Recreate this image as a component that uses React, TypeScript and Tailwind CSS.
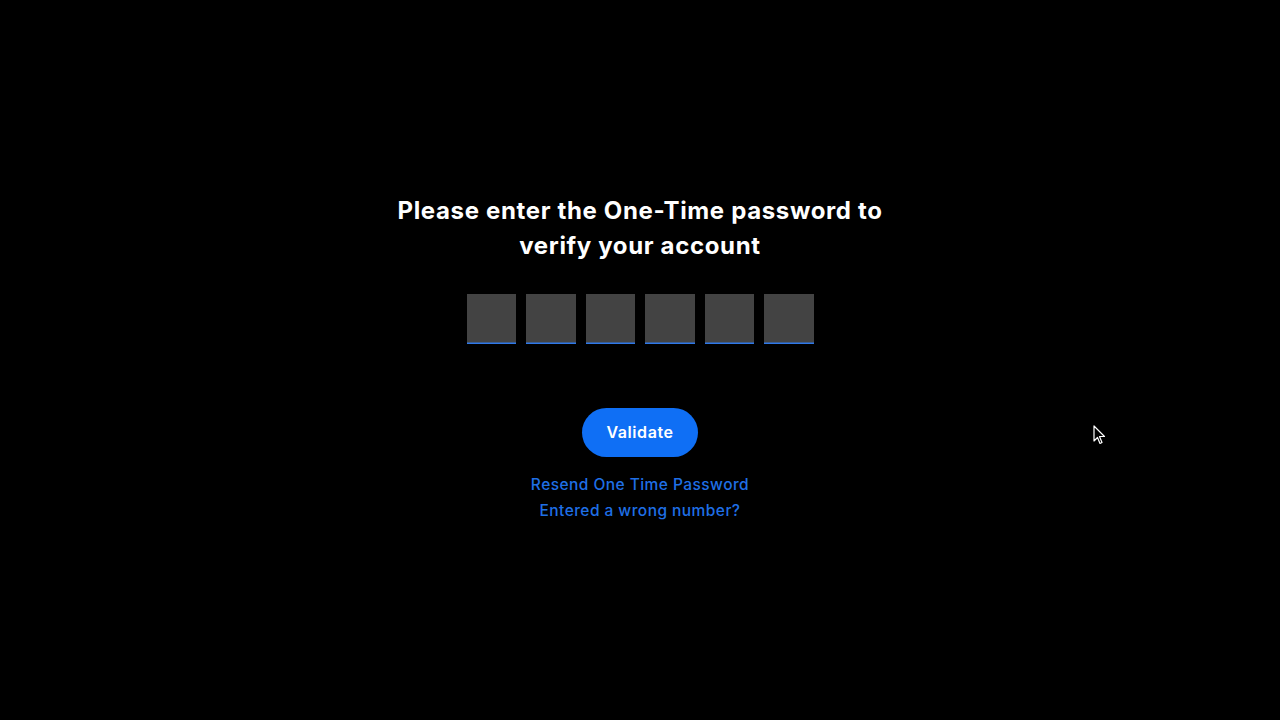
import { useRef } from "react";

const font = { fontFamily: '"Inter", "Noto Sans", sans-serif' };

export default function App() {
  const refs = useRef<(HTMLInputElement | null)[]>([]);

  return (
    <div className="relative min-h-screen w-full bg-black flex items-center justify-center" style={font}>
      <div className="flex flex-col items-center pb-[4px]">
        <h1 className="text-white font-bold text-[24px] leading-[35px] text-center tracking-[0.65px] w-[520px]">
          Please enter the One-Time password to verify your account
        </h1>

        <div className="flex gap-[10px] mt-[31px]">
          {[0, 1, 2, 3, 4, 5].map((i) => (
            <input
              key={i}
              ref={(el) => {
                refs.current[i] = el;
              }}
              maxLength={1}
              className="w-[49.5px] h-[50px] bg-[#434343] shadow-[inset_0_-1.5px_0_#2f78e8] text-white text-center text-xl outline-none"
            />
          ))}
        </div>

        <button className="mt-[64px] w-[116px] h-[49px] rounded-full bg-[#0f6ff5] text-white font-semibold text-[16px] tracking-[0.6px]">
          Validate
        </button>

        <div className="mt-[15px] flex flex-col items-center text-[#1f6fe6] font-medium text-[15.5px] leading-[26px] tracking-[0.45px]">
          <a href="#" className="hover:underline">Resend One Time Password</a>
          <a href="#" className="hover:underline">Entered a wrong number?</a>
        </div>
      </div>

      {/* mouse pointer */}
      <svg className="absolute left-[1093px] top-[425px]" width="13" height="20" viewBox="0 0 13 20">
        <path d="M1 1 L1 16 L4.5 12.5 L7 18.5 L9 17.5 L6.5 11.5 L11.5 11.5 Z" fill="black" stroke="white" strokeWidth="1.2" strokeLinejoin="round" />
      </svg>
    </div>
  );
}
